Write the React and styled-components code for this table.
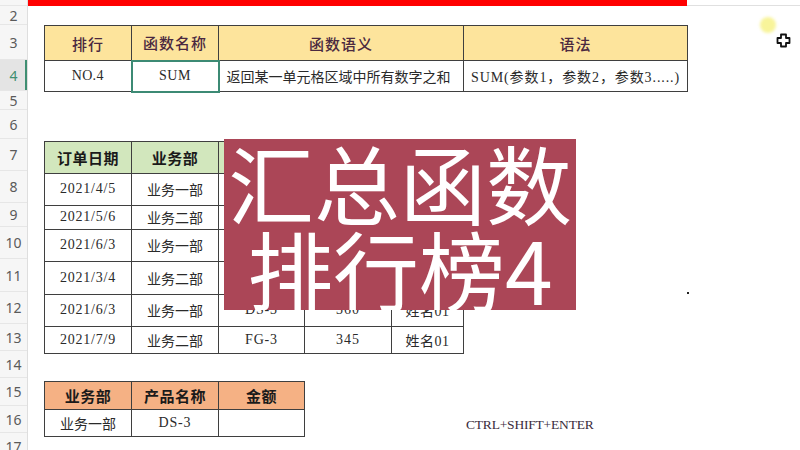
import React from "react";
import styled, { createGlobalStyle } from "styled-components";

// row heights of the visible sheet, top to bottom
const ROWS = [
  { n: "", h: 6 },
  { n: 2, h: 19 },
  { n: 3, h: 35 },
  { n: 4, h: 31, active: true },
  { n: 5, h: 19 },
  { n: 6, h: 29 },
  { n: 7, h: 32 },
  { n: 8, h: 32 },
  { n: 9, h: 24 },
  { n: 10, h: 32 },
  { n: 11, h: 33 },
  { n: 12, h: 32 },
  { n: 13, h: 27 },
  { n: 14, h: 27 },
  { n: 15, h: 28 },
  { n: 16, h: 27 },
  { n: 17, h: 27 },
];

const orders = [
  { date: "2021/4/5", dept: "业务一部", prod: "DS-3", amount: 360, seller: "姓名01", h: 32 },
  { date: "2021/5/6", dept: "业务二部", prod: "FG-3", amount: 345, seller: "姓名02", h: 24 },
  { date: "2021/6/3", dept: "业务一部", prod: "DS-3", amount: 280, seller: "姓名03", h: 32 },
  { date: "2021/3/4", dept: "业务二部", prod: "HK-2", amount: 410, seller: "姓名02", h: 33 },
  { date: "2021/6/3", dept: "业务一部", prod: "DS-3", amount: 360, seller: "姓名01", h: 32 },
  { date: "2021/7/9", dept: "业务二部", prod: "FG-3", amount: 345, seller: "姓名01", h: 27 },
];

const GlobalStyle = createGlobalStyle`
  html, body {
    margin: 0;
    padding: 0;
    background: #ffffff;
    overflow: hidden;
  }
`;

const Page = styled.div`
  position: relative;
  width: 800px;
  height: 450px;
  overflow: hidden;
  display: flex;
  background: #ffffff;
  font-family: "Liberation Serif", "Noto Sans CJK SC", serif;
`;

const Gutter = styled.div`
  width: 28px;
  flex: none;
  display: flex;
  flex-direction: column;
  background: #f6f6f6;
  border-right: 1px solid #dedede;
  box-sizing: border-box;
`;

const RowHead = styled.div`
  height: ${(p) => p.$h}px;
  flex: none;
  box-sizing: border-box;
  border-bottom: 1px solid #e6e6e6;
  display: flex;
  align-items: center;
  justify-content: center;
  font-family: "Noto Sans", "Liberation Sans", sans-serif;
  font-size: 14px;
  color: ${(p) => (p.$active ? "#3f8f72" : "#5a5a5a")};
  background: ${(p) => (p.$active ? "#e4e4e4" : "transparent")};
  box-shadow: ${(p) => (p.$active ? "inset -2px 0 0 #3f8f72" : "none")};
`;

const Canvas = styled.div`
  flex: 1;
  display: flex;
  flex-direction: column;
`;

const TopStrip = styled.div`
  height: 6px;
  flex: none;
  display: flex;
  border-bottom: 1px solid #e0e0e0;
  box-sizing: border-box;
`;

const RedBar = styled.div`
  width: 659px;
  height: 6px;
  background: #ff0000;
`;

const Gap = styled.div`
  height: ${(p) => p.$h}px;
  flex: none;
`;

const Table = styled.table`
  margin-left: 16px;
  border-collapse: collapse;
  table-layout: fixed;
  width: ${(p) => p.$w}px;
  flex: none;
`;

const Row = styled.tr`
  height: ${(p) => p.$h}px;
`;

const HeadCell = styled.td`
  border: 1px solid #3f3f3f;
  background: ${(p) => p.$bg};
  color: ${(p) => p.$color || "#1a1a1a"};
  font-family: "Noto Sans CJK SC", sans-serif;
  font-size: 15px;
  font-weight: ${(p) => p.$weight || 700};
  text-align: center;
  padding: 0;
  letter-spacing: ${(p) => (p.$ls == null ? 1 : p.$ls)}px;
`;

const Cell = styled.td`
  border: ${(p) => (p.$selected ? "2px solid #3c8a74" : "1px solid #3f3f3f")};
  font-family: "Liberation Serif", "Noto Sans CJK SC", serif;
  font-size: 14px;
  color: #2a2a2a;
  text-align: ${(p) => p.$align || "center"};
  padding: 0 0 0 ${(p) => (p.$align === "left" ? 7 : 0)}px;
  white-space: nowrap;
  overflow: hidden;
  letter-spacing: ${(p) => p.$ls || 0}px;
`;

const BottomRow = styled.div`
  display: flex;
  align-items: flex-end;
`;

const Note = styled.div`
  margin-left: 161px;
  height: 27px;
  line-height: 29px;
  font-family: "Liberation Serif", serif;
  font-size: 13.5px;
  letter-spacing: -0.2px;
  color: #3a2c3c;
`;

const Banner = styled.div`
  position: absolute;
  left: 224px;
  top: 139px;
  width: 352px;
  height: 171px;
  background: #ab4657;
  color: #ffffff;
  font-family: "Noto Sans CJK SC", sans-serif;
  font-weight: 400;
  font-size: 86px;
  line-height: 86px;
  text-align: center;
  white-space: nowrap;
  overflow: hidden;
`;

const Glow = styled.div`
  position: absolute;
  left: 760px;
  top: 17px;
  width: 16px;
  height: 16px;
  border-radius: 50%;
  background: #f8f49a;
  filter: blur(1.5px);
`;

const Cursor = styled.svg`
  position: absolute;
  left: 776px;
  top: 33px;
`;

const Speck = styled.div`
  position: absolute;
  left: 687px;
  top: 292px;
  width: 2px;
  height: 2px;
  background: #222;
`;

function CrossCursor() {
  return (
    <Cursor width="15" height="15" viewBox="0 0 15 15">
      <path
        d="M5 1.5h5v3.5h3.5v5H10v3.5H5V10H1.5V5H5z"
        fill="#ffffff"
        stroke="#111111"
        strokeWidth="1.8"
        strokeLinejoin="round"
      />
    </Cursor>
  );
}

export default function App() {
  return (
    <>
      <GlobalStyle />
      <Page>
        <Gutter>
          {ROWS.map((r, i) => (
            <RowHead key={i} $h={r.h} $active={r.active}>
              {r.n}
            </RowHead>
          ))}
        </Gutter>

        <Canvas>
          <TopStrip>
            <RedBar />
          </TopStrip>
          <Gap $h={19} />

          <Table $w={643}>
            <colgroup>
              <col style={{ width: 87 }} />
              <col style={{ width: 87 }} />
              <col style={{ width: 245 }} />
              <col style={{ width: 224 }} />
            </colgroup>
            <tbody>
              <Row $h={35}>
                <HeadCell $bg="#fde49c" $color="#4b2940" $weight={500}>排行</HeadCell>
                <HeadCell $bg="#fde49c" $color="#4b2940" $weight={500}>函数名称</HeadCell>
                <HeadCell $bg="#fde49c" $color="#4b2940" $weight={500}>函数语义</HeadCell>
                <HeadCell $bg="#fde49c" $color="#4b2940" $weight={500}>语法</HeadCell>
              </Row>
              <Row $h={31}>
                <Cell $ls={0.3}>NO.4</Cell>
                <Cell $selected $ls={0.5}>SUM</Cell>
                <Cell $align="left">返回某一单元格区域中所有数字之和</Cell>
                <Cell $align="left" $ls={0.9}>SUM(参数1，参数2，参数3.....)</Cell>
              </Row>
            </tbody>
          </Table>

          <Gap $h={48} />

          <Table $w={419}>
            <colgroup>
              <col style={{ width: 87 }} />
              <col style={{ width: 87 }} />
              <col style={{ width: 86 }} />
              <col style={{ width: 87 }} />
              <col style={{ width: 72 }} />
            </colgroup>
            <tbody>
              <Row $h={32}>
                <HeadCell $bg="#d2e7bd" $ls={0.5}>订单日期</HeadCell>
                <HeadCell $bg="#d2e7bd" $ls={0.5}>业务部</HeadCell>
                <HeadCell $bg="#d2e7bd" $ls={0.5}>产品名称</HeadCell>
                <HeadCell $bg="#d2e7bd" $ls={0.5}>金额</HeadCell>
                <HeadCell $bg="#d2e7bd" $ls={0.5}>销售员</HeadCell>
              </Row>
              {orders.map((o, i) => (
                <Row key={i} $h={o.h}>
                  <Cell $ls={0.8}>{o.date}</Cell>
                  <Cell>{o.dept}</Cell>
                  <Cell $ls={0.8}>{o.prod}</Cell>
                  <Cell $ls={1}>{o.amount}</Cell>
                  <Cell $ls={0.5}>{o.seller}</Cell>
                </Row>
              ))}
            </tbody>
          </Table>

          <Gap $h={27} />

          <BottomRow>
            <Table $w={260}>
              <colgroup>
                <col style={{ width: 87 }} />
                <col style={{ width: 87 }} />
                <col style={{ width: 86 }} />
              </colgroup>
              <tbody>
                <Row $h={28}>
                  <HeadCell $bg="#f5b184" $ls={0.5}>业务部</HeadCell>
                  <HeadCell $bg="#f5b184" $ls={0.5}>产品名称</HeadCell>
                  <HeadCell $bg="#f5b184" $ls={0.5}>金额</HeadCell>
                </Row>
                <Row $h={27}>
                  <Cell>业务一部</Cell>
                  <Cell $ls={0.8}>DS-3</Cell>
                  <Cell />
                </Row>
              </tbody>
            </Table>
            <Note>CTRL+SHIFT+ENTER</Note>
          </BottomRow>
        </Canvas>

        <Banner>
          汇总函数
          <br />
          排行榜4
        </Banner>
        <Glow />
        <CrossCursor />
        <Speck />
      </Page>
    </>
  );
}
